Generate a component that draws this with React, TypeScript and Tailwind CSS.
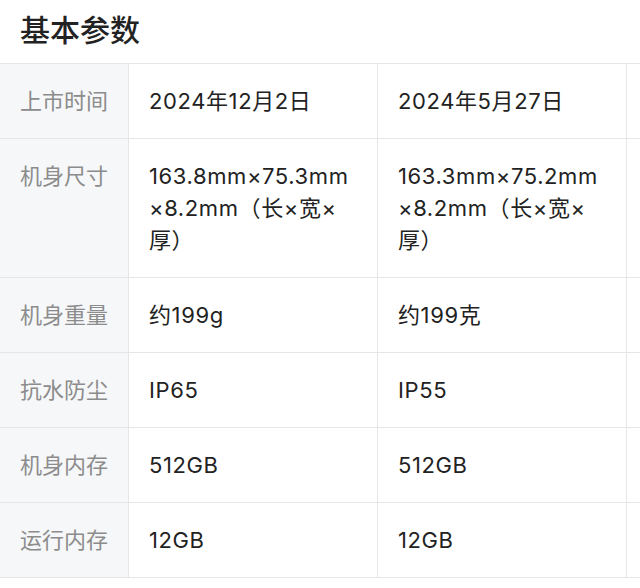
import React from 'react';

type Row = { label: string; values: string[] };

const rows: Row[] = [
  { label: '上市时间', values: ['2024年12月2日', '2024年5月27日', ''] },
  { label: '机身尺寸', values: ['163.8mm×75.3mm×8.2mm（长×宽×厚）', '163.3mm×75.2mm×8.2mm（长×宽×厚）', ''] },
  { label: '机身重量', values: ['约199g', '约199克', ''] },
  { label: '抗水防尘', values: ['IP65', 'IP55', ''] },
  { label: '机身内存', values: ['512GB', '512GB', ''] },
  { label: '运行内存', values: ['12GB', '12GB', ''] },
];

const App = () => {
  return (
    <div
      className="w-[640px] h-[588px] overflow-hidden bg-white text-[#222]"
      style={{ fontFamily: 'Inter, "Noto Sans CJK SC", sans-serif' }}
    >
      <div className="h-[63px] flex items-center px-5 pb-1">
        <h2 className="text-[30px] font-medium leading-10">基本参数</h2>
      </div>

      <div className="grid grid-cols-[129px_249px_249px_249px] w-[876px] border-t border-[#e6e6e6]">
        {rows.map((row) => (
          <React.Fragment key={row.label}>
            <div className="bg-[#f6f7f9] border-r border-b border-[#e6e6e6] px-5 py-[21px] text-[22px] leading-8 text-[#8c8c8c]">
              {row.label}
            </div>
            {row.values.map((v, i) => (
              <div
                key={i}
                className="border-r border-b border-[#e6e6e6] pl-5 pr-6 py-[21px] text-[22px] leading-8 tracking-[0.6px] break-all"
              >
                {v}
              </div>
            ))}
          </React.Fragment>
        ))}
      </div>
    </div>
  );
};

export default App;
